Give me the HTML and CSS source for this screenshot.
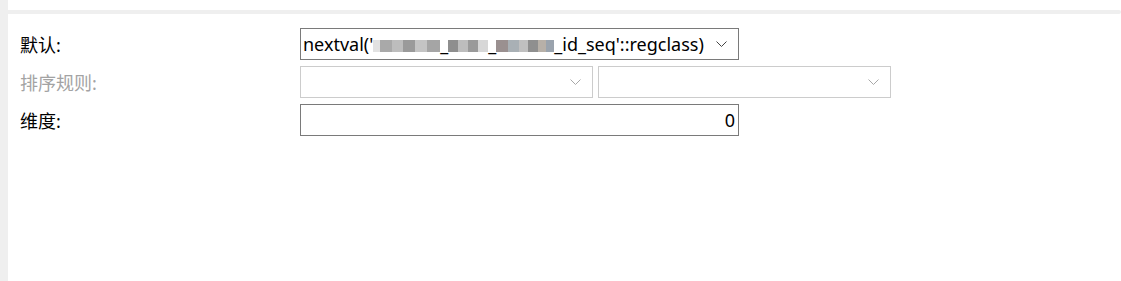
FILE: index.html
```html
<!DOCTYPE html>
<html lang="zh">
<head>
<meta charset="utf-8">
<link rel="stylesheet" href="styles.css">
</head>
<body>
<div class="page">
  <div class="side"></div>
  <div class="main">
    <div class="band"></div>
    <div class="form">
      <div class="label">默认:</div>
      <div class="field select">
        <span class="value">nextval('<span class="blur b1"></span>_<span class="blur b2"></span>_<span class="blur b3"></span>_id_seq'::regclass)</span>
        <svg class="chev" width="11" height="6" viewBox="0 0 11 6"><path d="M0.5 0.5 L5.5 5.5 L10.5 0.5" fill="none" stroke="#444" stroke-width="1"/></svg>
      </div>
      <div class="label disabled">排序规则:</div>
      <div class="pair">
        <div class="field select off">
          <span class="value"></span>
          <svg class="chev" width="11" height="6" viewBox="0 0 11 6"><path d="M0.5 0.5 L5.5 5.5 L10.5 0.5" fill="none" stroke="#a8a8a8" stroke-width="1"/></svg>
        </div>
        <div class="field select off">
          <span class="value"></span>
          <svg class="chev" width="11" height="6" viewBox="0 0 11 6"><path d="M0.5 0.5 L5.5 5.5 L10.5 0.5" fill="none" stroke="#a8a8a8" stroke-width="1"/></svg>
        </div>
      </div>
      <div class="label">维度:</div>
      <div class="field num"><span class="value">0</span></div>
    </div>
  </div>
</div>
</body>
</html>
```

FILE: styles.css
```css
html, body {
  margin: 0;
  padding: 0;
  background: #fff;
  height: 100%;
}
.page {
  display: flex;
  height: 281px;
  font-family: "Noto Sans", "Noto Sans CJK SC", sans-serif;
}
.side {
  width: 8px;
  flex: none;
  background: #efefef;
}
.main {
  flex: 1;
  padding-top: 10px;
}
.band {
  height: 4px;
  background: #efefef;
  border-radius: 0 2px 2px 0;
}
.form {
  display: grid;
  grid-template-columns: 280px 439px;
  row-gap: 6px;
  margin-top: 14px;
  padding-left: 12px;
}
.label {
  height: 32px;
  display: flex;
  align-items: center;
  font-size: 18px;
  color: #000;
}
.label.disabled {
  color: #a3a3a3;
}
.field {
  box-sizing: border-box;
  height: 32px;
  border: 1px solid #7a7a7a;
  display: flex;
  align-items: center;
  padding: 0 2px;
  font-size: 18px;
  color: #000;
  background: #fff;
}
.select .value {
  flex: 1;
  white-space: nowrap;
  overflow: hidden;
}
.chev {
  flex: none;
  margin-right: 9px;
  margin-left: 4px;
}
.off {
  border-color: #cccccc;
}
.pair {
  display: grid;
  grid-template-columns: 293px 293px;
  column-gap: 5px;
  width: 591px;
}
.num {
  justify-content: flex-end;
  padding-right: 3px;
}
.blur {
  display: inline-block;
  height: 12px;
  vertical-align: -1px;
}
.b1 {
  width: 67px;
  background: linear-gradient(90deg, #e2e2e2 0 10%, #a9a9a9 10% 28%, #bdbdbd 28% 45%, #9a9a9a 45% 62%, #c4c4c4 62% 80%, #a5a5a5 80% 100%);
}
.b2 {
  width: 40px;
  background: linear-gradient(90deg, #8e8e8e 0 25%, #bdbdbd 25% 50%, #9a9a9a 50% 75%, #d7d7d7 75% 100%);
}
.b3 {
  width: 58px;
  background: linear-gradient(90deg, #9a9090 0 20%, #a9b0b5 20% 40%, #c0c0c0 40% 55%, #8f8f8f 55% 72%, #b7b0a8 72% 86%, #9aa3ad 86% 100%);
}
```
